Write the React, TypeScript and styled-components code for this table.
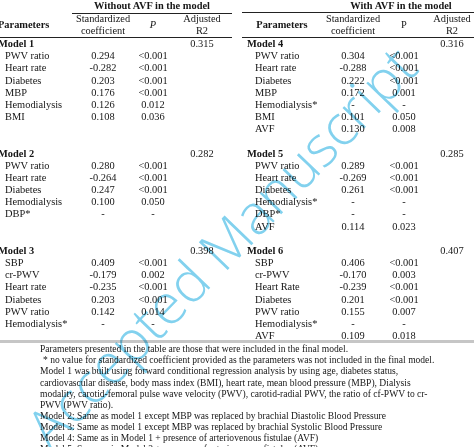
import React from "react";
import styled, { createGlobalStyle } from "styled-components";

type RowData = {
  label?: string;
  model?: boolean;
  coef?: string;
  p?: string;
  r2?: string;
};

type TableSpec = {
  title: string;
  cols: string;
  width: number;
  paramAlign: "left" | "center";
  italicP: boolean;
  fullTitleRule: boolean;
  modelPad: number;
  labelPad: number;
  rows: RowData[];
};

const GlobalStyle = createGlobalStyle`
  html, body {
    margin: 0;
    padding: 0;
    background: #fff;
  }
  body {
    width: 474px;
    height: 447px;
    overflow: hidden;
  }
`;

const Page = styled.div`
  position: relative;
  width: 474px;
  height: 447px;
  overflow: hidden;
  font-family: "Liberation Serif", "Times New Roman", serif;
  color: #161616;
`;

const Tables = styled.div`
  display: flex;
  gap: 10px;
  margin-left: -3px;
`;

const TableBox = styled.div<{ $width: number }>`
  display: flex;
  flex-direction: column;
  width: ${(p) => p.$width}px;
  flex: none;
  font-size: 10.4px;
`;

const Row = styled.div<{ $cols: string }>`
  display: grid;
  grid-template-columns: ${(p) => p.$cols};
  height: 12.18px;
  line-height: 12.18px;
  white-space: nowrap;
`;

const TitleRow = styled(Row)<{ $full: boolean }>`
  height: 13px;
  line-height: 12px;
  box-sizing: border-box;
  border-bottom: ${(p) => (p.$full ? "1px solid #222" : "none")};
`;

const Title = styled.div`
  grid-column: 2 / 5;
  text-align: center;
  font-weight: bold;
  border-bottom: 1px solid #222;
  margin-bottom: -1px;
`;

const HeadRow = styled(Row)`
  height: 25px;
  box-sizing: border-box;
  border-bottom: 1px solid #222;
  line-height: 12px;
  align-items: center;
`;

const HeadCell = styled.div<{ $align?: string; $bold?: boolean; $italic?: boolean; $pad?: number }>`
  text-align: ${(p) => p.$align ?? "center"};
  font-weight: ${(p) => (p.$bold ? "bold" : "normal")};
  font-style: ${(p) => (p.$italic ? "italic" : "normal")};
  padding-left: ${(p) => p.$pad ?? 0}px;
`;

const Cell = styled.div<{ $align?: string; $bold?: boolean; $pad?: number }>`
  text-align: ${(p) => p.$align ?? "center"};
  font-weight: ${(p) => (p.$bold ? "bold" : "normal")};
  padding-left: ${(p) => p.$pad ?? 0}px;
`;

const Rule = styled.div`
  height: 3px;
  margin-top: -2px;
  background: #c6c6c6;
`;

const Notes = styled.div`
  padding-left: 40px;
  font-size: 9.55px;
  line-height: 11.1px;
  white-space: nowrap;
`;

const Note = styled.div<{ $indent?: number }>`
  padding-left: ${(p) => p.$indent ?? 0}px;
`;

const Watermark = styled.div`
  position: absolute;
  left: 220px;
  top: 246px;
  transform: translate(-50%, -50%) rotate(-46deg);
  font-family: "Open Sans", "Liberation Sans", Arial, sans-serif;
  font-weight: 300;
  font-size: 56px;
  color: #62c6ea;
  white-space: nowrap;
  mix-blend-mode: multiply;
  opacity: 0.8;
  pointer-events: none;
`;

const leftRows: RowData[] = [
  { label: "Model 1", model: true, r2: "0.315" },
  { label: "PWV ratio", coef: "0.294", p: "<0.001" },
  { label: "Heart rate", coef: "-0.282", p: "<0.001" },
  { label: "Diabetes", coef: "0.203", p: "<0.001" },
  { label: "MBP", coef: "0.176", p: "<0.001" },
  { label: "Hemodialysis", coef: "0.126", p: "0.012" },
  { label: "BMI", coef: "0.108", p: "0.036" },
  {},
  {},
  { label: "Model 2", model: true, r2: "0.282" },
  { label: "PWV ratio", coef: "0.280", p: "<0.001" },
  { label: "Heart rate", coef: "-0.264", p: "<0.001" },
  { label: "Diabetes", coef: "0.247", p: "<0.001" },
  { label: "Hemodialysis", coef: "0.100", p: "0.050" },
  { label: "DBP*", coef: "-", p: "-" },
  {},
  {},
  { label: "Model 3", model: true, r2: "0.398" },
  { label: "SBP", coef: "0.409", p: "<0.001" },
  { label: "cr-PWV", coef: "-0.179", p: "0.002" },
  { label: "Heart rate", coef: "-0.235", p: "<0.001" },
  { label: "Diabetes", coef: "0.203", p: "<0.001" },
  { label: "PWV ratio", coef: "0.142", p: "0.014" },
  { label: "Hemodialysis*", coef: "-", p: "-" },
  {},
];

const rightRows: RowData[] = [
  { label: "Model 4", model: true, r2: "0.316" },
  { label: "PWV ratio", coef: "0.304", p: "<0.001" },
  { label: "Heart rate", coef: "-0.288", p: "<0.001" },
  { label: "Diabetes", coef: "0.222", p: "<0.001" },
  { label: "MBP", coef: "0.172", p: "0.001" },
  { label: "Hemodialysis*", coef: "-", p: "-" },
  { label: "BMI", coef: "0.101", p: "0.050" },
  { label: "AVF", coef: "0.130", p: "0.008" },
  {},
  { label: "Model 5", model: true, r2: "0.285" },
  { label: "PWV ratio", coef: "0.289", p: "<0.001" },
  { label: "Heart rate", coef: "-0.269", p: "<0.001" },
  { label: "Diabetes", coef: "0.261", p: "<0.001" },
  { label: "Hemodialysis*", coef: "-", p: "-" },
  { label: "DBP*", coef: "-", p: "-" },
  { label: "AVF", coef: "0.114", p: "0.023" },
  {},
  { label: "Model 6", model: true, r2: "0.407" },
  { label: "SBP", coef: "0.406", p: "<0.001" },
  { label: "cr-PWV", coef: "-0.170", p: "0.003" },
  { label: "Heart Rate", coef: "-0.239", p: "<0.001" },
  { label: "Diabetes", coef: "0.201", p: "<0.001" },
  { label: "PWV ratio", coef: "0.155", p: "0.007" },
  { label: "Hemodialysis*", coef: "-", p: "-" },
  { label: "AVF", coef: "0.109", p: "0.018" },
];

const tables: TableSpec[] = [
  {
    title: "Without AVF in the model",
    cols: "75px 62px 38px 60px",
    width: 235,
    paramAlign: "left",
    italicP: true,
    fullTitleRule: false,
    modelPad: 1,
    labelPad: 8,
    rows: leftRows,
  },
  {
    title: "With AVF in the model",
    cols: "80px 62px 40px 56px",
    width: 238,
    paramAlign: "center",
    italicP: false,
    fullTitleRule: true,
    modelPad: 5,
    labelPad: 13,
    rows: rightRows,
  },
];

const notes: { text: string; indent?: number }[] = [
  { text: "Parameters presented in the table are those that were included in the final model." },
  {
    text: "* no value for standardized coefficient provided as the parameters was not included in the final model.",
    indent: 3,
  },
  { text: "Model 1 was built using forward conditional regression analysis by using age, diabetes status," },
  { text: "cardiovascular disease, body mass index (BMI), heart rate, mean blood pressure (MBP), Dialysis" },
  { text: "modality, carotid-femoral pulse wave velocity (PWV), carotid-radial PWV, the ratio of cf-PWV to cr-" },
  { text: "PWV (PWV ratio)." },
  { text: "Model 2: Same as model 1 except MBP was replaced by brachial Diastolic Blood Pressure" },
  { text: "Model 3: Same as model 1 except MBP was replaced by brachial Systolic Blood Pressure" },
  { text: "Model 4: Same as in Model 1 + presence of arteriovenous fistulae (AVF)" },
  { text: "Model 5: Same as in Model 2 + presence of arteriovenous fistulae (AVF)" },
];

const ResultTable = ({ spec }: { spec: TableSpec }) => (
  <TableBox $width={spec.width}>
    <TitleRow $cols={spec.cols} $full={spec.fullTitleRule}>
      <div />
      <Title>{spec.title}</Title>
    </TitleRow>
    <HeadRow $cols={spec.cols}>
      <HeadCell $align={spec.paramAlign} $bold $pad={spec.paramAlign === "left" ? 1 : 0}>
        Parameters
      </HeadCell>
      <HeadCell>
        Standardized
        <br />
        coefficient
      </HeadCell>
      <HeadCell $italic={spec.italicP}>P</HeadCell>
      <HeadCell>
        Adjusted
        <br />
        R2
      </HeadCell>
    </HeadRow>
    {spec.rows.map((r, i) => (
      <Row key={i} $cols={spec.cols}>
        <Cell $align="left" $bold={r.model} $pad={r.model ? spec.modelPad : spec.labelPad}>
          {r.label}
        </Cell>
        <Cell>{r.coef}</Cell>
        <Cell>{r.p}</Cell>
        <Cell>{r.r2}</Cell>
      </Row>
    ))}
  </TableBox>
);

export default function App() {
  return (
    <Page>
      <GlobalStyle />
      <Tables>
        {tables.map((t) => (
          <ResultTable key={t.title} spec={t} />
        ))}
      </Tables>
      <Rule />
      <Notes>
        {notes.map((n, i) => (
          <Note key={i} $indent={n.indent}>
            {n.text}
          </Note>
        ))}
      </Notes>
      <Watermark>Accepted Manuscript</Watermark>
    </Page>
  );
}
